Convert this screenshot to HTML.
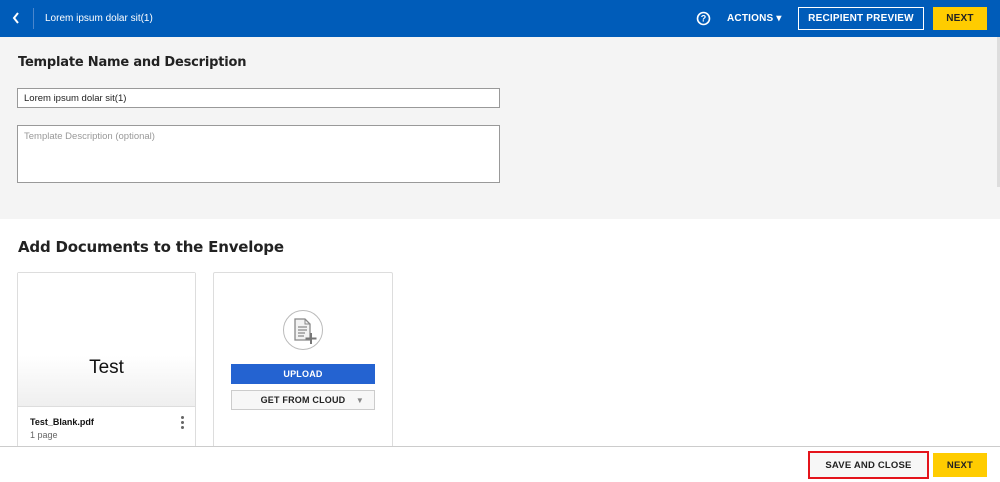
<!DOCTYPE html>
<html><head><style>
*{box-sizing:border-box;margin:0;padding:0}
body{width:1000px;height:482px;overflow:hidden;background:#fff;font-family:"Liberation Sans",sans-serif;position:relative}
.a{position:absolute}
.hdr{left:0;top:0;width:1000px;height:37px;background:#005cb9}
.btn{display:flex;align-items:center;justify-content:center;font-weight:bold;font-size:10px;letter-spacing:.2px}
</style></head><body>
<div class="a hdr"></div>
<svg class="a" style="left:12px;top:12px" width="8" height="12"><path d="M6 1L2 6l4 5" stroke="#fff" stroke-width="2" fill="none"/></svg>
<div class="a" style="left:33px;top:8px;width:1px;height:21px;background:#4a86cc"></div>
<div class="a" style="left:45px;top:13px;color:#fff;font-size:10px">Lorem ipsum dolar sit(1)</div>
<svg class="a" style="left:696px;top:11px" width="15" height="15"><circle cx="7.5" cy="7.5" r="6" stroke="#fff" stroke-width="1.6" fill="none"/><text x="7.5" y="10.5" font-size="9" font-weight="bold" fill="#fff" text-anchor="middle" font-family="Liberation Sans">?</text></svg>
<div class="a" style="left:727px;top:13px;color:#fff;font-size:10px;font-weight:bold;letter-spacing:.2px">ACTIONS ▾</div>
<div class="a btn" style="left:798px;top:7px;width:126px;height:23px;border:1px solid #fff;color:#fff">RECIPIENT PREVIEW</div>
<div class="a btn" style="left:933px;top:7px;width:54px;height:23px;background:#ffcc00;color:#222">NEXT</div>
<div class="a" style="left:0;top:37px;width:1000px;height:182px;background:#f4f4f4"></div>
<div class="a" style="left:997px;top:37px;width:3px;height:150px;background:#ddd"></div>
<div class="a" style="left:18px;top:55px;font-size:13px;font-weight:bold;color:#222;font-family:'DejaVu Sans',sans-serif;letter-spacing:-.2px">Template Name and Description</div>
<div class="a" style="left:17px;top:88px;width:483px;height:20px;background:#fff;border:1px solid #999;font-size:9.5px;padding:4px 6px;color:#222">Lorem ipsum dolar sit(1)</div>
<div class="a" style="left:17px;top:125px;width:483px;height:58px;background:#fff;border:1px solid #999;font-size:9.5px;padding:5px 6px;color:#999">Template Description (optional)</div>
<div class="a" style="left:18px;top:238px;font-size:15px;font-weight:bold;color:#222;font-family:'DejaVu Sans',sans-serif;letter-spacing:-.2px">Add Documents to the Envelope</div>
<div class="a" style="left:17px;top:272px;width:179px;height:180px;border:1px solid #ddd;border-radius:2px;background:#fff">
 <div style="height:134px;background:linear-gradient(#fff 0,#fff 62%,#efefef 100%);border-bottom:1px solid #ddd;text-align:center;padding-top:84px;font-size:19px;color:#111">Test</div>
 <div style="padding:10px 12px;font-size:9px;font-weight:bold;color:#111">Test_Blank.pdf<div style="font-weight:normal;color:#666;margin-top:3px">1 page</div></div>
 <div class="a" style="right:11px;top:143px;width:3px;font-size:0">
  <div style="width:3px;height:3px;border-radius:50%;background:#666;margin-bottom:2px"></div><div style="width:3px;height:3px;border-radius:50%;background:#666;margin-bottom:2px"></div><div style="width:3px;height:3px;border-radius:50%;background:#666"></div></div>
</div>
<div class="a" style="left:213px;top:272px;width:180px;height:180px;border:1px solid #ddd;border-radius:2px;background:#fff"></div>
<svg class="a" style="left:282px;top:309px" width="42" height="42"><circle cx="21" cy="21" r="19.5" stroke="#bbb" fill="#fff"/><path d="M13 10h10l5 5v16H13z" fill="#f2f2f2" stroke="#888" stroke-width="1.3"/><path d="M23 10v5h5" fill="none" stroke="#888"/><path d="M16 18h9M16 21h9M16 24h7M16 27h6" stroke="#888" stroke-width="1.2"/><path d="M29 24v11M23.5 29.5h11" stroke="#777" stroke-width="2"/></svg>
<div class="a btn" style="left:231px;top:364px;width:144px;height:20px;background:#2463d1;color:#fff;font-size:9px">UPLOAD</div>
<div class="a btn" style="left:231px;top:390px;width:144px;height:20px;background:#f7f7f7;border:1px solid #ccc;color:#222;font-size:9px">GET FROM CLOUD<span style="position:absolute;right:10px;color:#888;font-size:8px">▼</span></div>
<div class="a" style="left:0;top:446px;width:1000px;height:36px;background:#fff;border-top:1px solid #ccc"></div>
<div class="a btn" style="left:808px;top:451px;width:121px;height:28px;border:2px solid #e4141b;background:#f7f7f7;color:#222;font-size:9.5px">SAVE AND CLOSE</div>
<div class="a btn" style="left:933px;top:453px;width:54px;height:24px;background:#ffcc00;color:#222;font-size:9.5px">NEXT</div>
</body></html>
